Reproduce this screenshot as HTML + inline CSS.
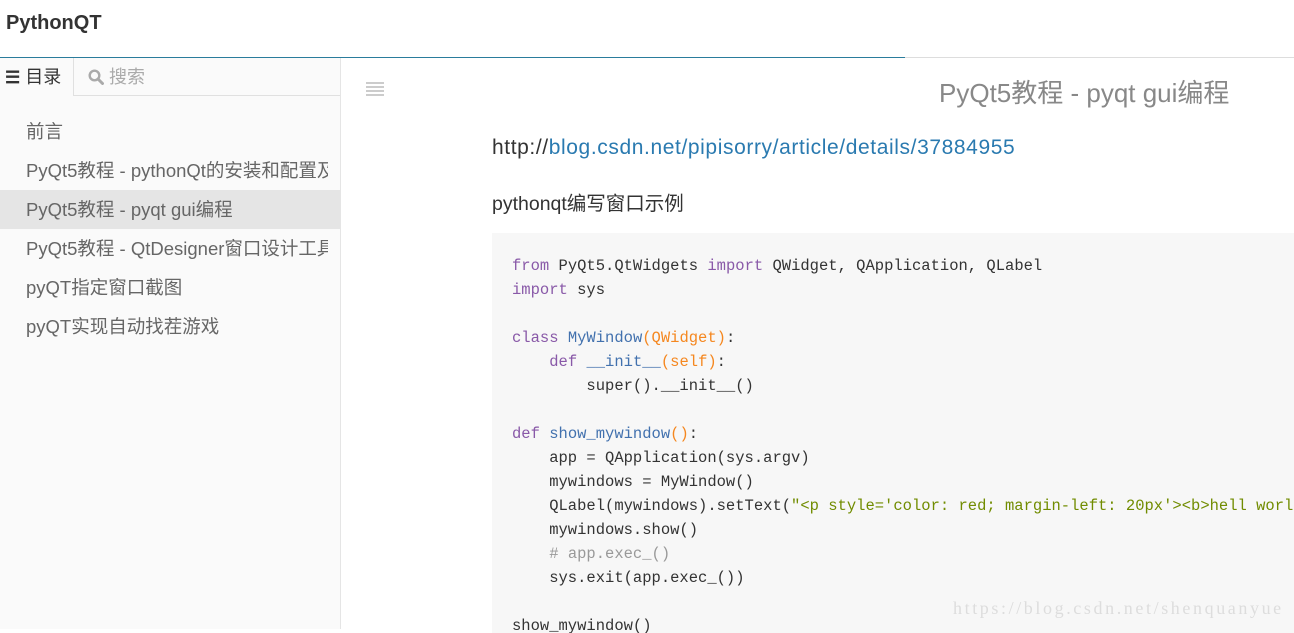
<!DOCTYPE html>
<html><head><meta charset="utf-8"><style>
*{margin:0;padding:0;box-sizing:border-box}
body{width:1294px;height:629px;overflow:hidden;background:#fff;font-family:"Liberation Sans","Noto Sans CJK SC",sans-serif;position:relative;color:#333}
.title{position:absolute;left:6px;top:12px;font-size:20px;font-weight:bold;color:#333}
.line1{position:absolute;left:0;top:57px;width:905px;height:1px;background:#2a7c9c}
.line2{position:absolute;left:905px;top:57px;width:389px;height:1px;background:#ddd}
.side{position:absolute;left:0;top:58px;width:341px;height:571px;background:#fafafa;border-right:1px solid #e5e5e5}
.tab{position:absolute;left:0;top:0;width:73px;height:38px;font-size:18px;line-height:38px;padding-left:5px;color:#333}
.search{position:absolute;left:73px;top:0;width:267px;height:38px;border-left:1px solid #e0e0e0;border-bottom:1px solid #e0e0e0;font-size:18px;line-height:38px;color:#aaa;padding-left:14px}
.item{position:absolute;left:0;width:340px;height:39px;line-height:39px;padding-left:26px;font-size:18.5px;color:#666;white-space:nowrap;overflow:hidden}
.item span{display:inline-block;width:302px;overflow:hidden;vertical-align:top}
.act{background:#e5e5e5}
pre{font-family:"Liberation Mono",monospace;font-size:15.5px;line-height:24px;color:#333}
.k{color:#8959a8}.f{color:#4271ae}.o{color:#f5871f}.s{color:#718c00}.c{color:#999}
</style></head><body>
<div class="title">PythonQT</div>
<div class="line1"></div><div class="line2"></div>
<div class="side">
<div class="tab"><b style="font-size:17px">☰</b> 目录</div>
<div class="search"><svg width="16" height="16" viewBox="0 0 16 16" style="vertical-align:-2px"><circle cx="6.5" cy="6.5" r="4.8" fill="none" stroke="#aaa" stroke-width="2.4"/><path d="M10 10l4.5 4.5" stroke="#aaa" stroke-width="3" stroke-linecap="round"/></svg> 搜索</div>
<div class="item" style="top:54px"><span>前言</span></div>
<div class="item" style="top:93px"><span>PyQt5教程 - pythonQt的安装和配置及</span></div>
<div class="item act" style="top:132px"><span>PyQt5教程 - pyqt gui编程</span></div>
<div class="item" style="top:171px"><span>PyQt5教程 - QtDesigner窗口设计工具</span></div>
<div class="item" style="top:210px"><span>pyQT指定窗口截图</span></div>
<div class="item" style="top:249px"><span>pyQT实现自动找茬游戏</span></div>
</div>
<div style="position:absolute;left:366px;top:82px;width:18px">
<div style="height:2px;background:#ccc;margin-bottom:2px"></div><div style="height:2px;background:#ccc;margin-bottom:2px"></div><div style="height:2px;background:#ccc;margin-bottom:2px"></div><div style="height:2px;background:#ccc"></div></div>
<div style="position:absolute;left:939px;top:73px;font-size:26px;color:#888;white-space:nowrap">PyQt5教程 - pyqt gui编程</div>
<div style="position:absolute;left:492px;top:136px;font-size:21px;color:#333;white-space:nowrap;letter-spacing:0.6px">http://<span style="color:#2a7ab0">blog.csdn.net/pipisorry/article/details/37884955</span></div>
<div style="position:absolute;left:492px;top:187px;font-size:19.5px;color:#333">pythonqt编写窗口示例</div>
<div style="position:absolute;left:492px;top:233px;width:802px;height:400px;background:#f7f7f7;padding:21px 0 0 20px;overflow:hidden">
<pre><span class="k">from</span> PyQt5.QtWidgets <span class="k">import</span> QWidget, QApplication, QLabel
<span class="k">import</span> sys

<span class="k">class</span> <span class="f">MyWindow</span><span class="o">(QWidget)</span>:
    <span class="k">def</span> <span class="f">__init__</span><span class="o">(self)</span>:
        super().__init__()

<span class="k">def</span> <span class="f">show_mywindow</span><span class="o">()</span>:
    app = QApplication(sys.argv)
    mywindows = MyWindow()
    QLabel(mywindows).setText(<span class="s">"&lt;p style='color: red; margin-left: 20px'&gt;&lt;b&gt;hell world&lt;/b&gt;&lt;/p&gt;"</span>)
    mywindows.show()
    <span class="c"># app.exec_()</span>
    sys.exit(app.exec_())

show_mywindow()</pre>
</div>
<div style="position:absolute;left:953px;top:598px;font-family:'Liberation Serif',serif;font-size:18px;color:#ddd;letter-spacing:2.6px;white-space:nowrap">https://blog.csdn.net/shenquanyue</div>
</body></html>
